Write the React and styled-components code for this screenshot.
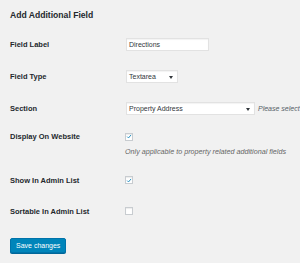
import React from "react";
import styled, { createGlobalStyle } from "styled-components";

const GlobalStyle = createGlobalStyle`
  html, body {
    margin: 0;
    padding: 0;
    background: #f1f1f1;
  }
  body {
    font-family: "Liberation Sans", Arial, sans-serif;
    color: #23282d;
  }
`;

const Page = styled.div`
  width: 300px;
  height: 263px;
  overflow: hidden;
  padding: 0 0 0 10px;
  box-sizing: border-box;
  background: #f1f1f1;
`;

const Title = styled.h2`
  margin: 9px 0 7.5px;
  font-size: 8.6px;
  line-height: 12px;
  font-weight: 700;
  color: #23282d;
  white-space: nowrap;
`;

const Row = styled.div`
  display: grid;
  grid-template-columns: 115px 1fr;
  padding: ${(p) => p.$top}px 0 ${(p) => p.$bottom}px;
`;

const Label = styled.div`
  font-size: 7.5px;
  font-weight: 700;
  line-height: 13px;
  height: 13px;
  white-space: nowrap;
  color: #23282d;
`;

const Control = styled.div`
  display: flex;
  flex-direction: column;
  min-width: 0;
`;

const Line = styled.div`
  display: flex;
  align-items: center;
  height: 13px;
  gap: 3px;
  white-space: nowrap;
`;

const TextInput = styled.div`
  flex-shrink: 0;
  margin-left: 1px;
  width: ${(p) => p.$w}px;
  height: 13px;
  box-sizing: border-box;
  background: #fff;
  border: 1px solid #e2e2e2;
  box-shadow: inset 0 1px 1px rgba(0, 0, 0, 0.05);
  font-size: 7px;
  line-height: 11px;
  padding: 0 2px;
  color: #32373c;
`;

const Select = styled(TextInput)`
  position: relative;
  padding-right: 10px;
  &::after {
    content: "";
    position: absolute;
    right: 4px;
    top: 4.5px;
    border-left: 2px solid transparent;
    border-right: 2px solid transparent;
    border-top: 3px solid #32373c;
  }
`;

const Hint = styled.span`
  flex-shrink: 0;
  font-size: 7px;
  font-style: italic;
  color: #555d66;
`;

const Description = styled.p`
  margin: 3px 0 0;
  font-size: 7.2px;
  line-height: 12px;
  font-style: italic;
  color: #666;
  white-space: nowrap;
`;

const Box = styled.span`
  display: inline-flex;
  align-items: center;
  justify-content: center;
  width: 8px;
  height: 8px;
  box-sizing: border-box;
  background: #fff;
  border: 1px solid #c8ccd0;
  box-shadow: inset 0 1px 1px rgba(0, 0, 0, 0.08);
`;

const Button = styled.button`
  margin-top: 20.5px;
  height: 15px;
  padding: 0 5px;
  font-family: inherit;
  font-size: 7px;
  line-height: 13px;
  color: #fff;
  background: #0085ba;
  border: 1px solid #0073aa;
  border-radius: 2px;
  box-shadow: 0 1px 0 #006799;
  cursor: pointer;
`;

const Checkbox = ({ checked }) => (
  <Box>
    {checked && (
      <svg width="7" height="7" viewBox="0 0 10 10">
        <path d="M2 5.2 L4.2 7.4 L8.4 2.4" fill="none" stroke="#1e8cbe" strokeWidth="1.6" />
      </svg>
    )}
  </Box>
);

export default function App() {
  return (
    <Page>
      <GlobalStyle />
      <Title>Add Additional Field</Title>

      <Row $top={9.5} $bottom={9.5}>
        <Label>Field Label</Label>
        <Control>
          <Line>
            <TextInput $w={83}>Directions</TextInput>
          </Line>
        </Control>
      </Row>

      <Row $top={9.5} $bottom={9.5}>
        <Label>Field Type</Label>
        <Control>
          <Line>
            <Select $w={52}>Textarea</Select>
          </Line>
        </Control>
      </Row>

      <Row $top={9.5} $bottom={7.5}>
        <Label>Section</Label>
        <Control>
          <Line>
            <Select $w={129}>Property Address</Select>
            <Hint>Please select which section</Hint>
          </Line>
        </Control>
      </Row>

      <Row $top={7.5} $bottom={8}>
        <Label>Display On Website</Label>
        <Control>
          <Line>
            <Checkbox checked />
          </Line>
          <Description>Only applicable to property related additional fields</Description>
        </Control>
      </Row>

      <Row $top={7.5} $bottom={9}>
        <Label>Show In Admin List</Label>
        <Control>
          <Line>
            <Checkbox checked />
          </Line>
        </Control>
      </Row>

      <Row $top={9} $bottom={0}>
        <Label>Sortable In Admin List</Label>
        <Control>
          <Line>
            <Checkbox />
          </Line>
        </Control>
      </Row>

      <Button>Save changes</Button>
    </Page>
  );
}
